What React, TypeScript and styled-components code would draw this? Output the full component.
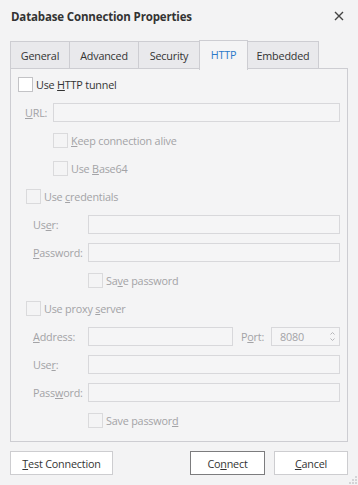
import React from "react";
import styled, { createGlobalStyle } from "styled-components";

const Global = createGlobalStyle`
  html, body { margin: 0; padding: 0; background: #f3f3f4; }
  body { font-family: "Open Sans", "Noto Sans", sans-serif; font-size: 10.8px; letter-spacing: -0.2px; color: #333; }
  * { box-sizing: border-box; }
`;

const Dialog = styled.div`
  width: 358px;
  height: 485px;
  background: #f3f3f4;
  display: flex;
  flex-direction: column;
  position: relative;
`;

const Header = styled.div`
  height: 32px;
  display: flex;
  align-items: center;
  justify-content: space-between;
  padding: 0 12px 0 11px;
`;

const Title = styled.div`
  font-weight: 700;
  font-size: 11.5px;
  letter-spacing: -0.15px;
  color: #333;
`;

const CloseBtn = styled.button`
  width: 14px;
  height: 14px;
  border: 0;
  padding: 0;
  background: transparent;
  display: flex;
  align-items: center;
  justify-content: center;
`;

const Tabs = styled.div`
  display: flex;
  align-items: flex-end;
  margin: 8px 0 0 10px;
  height: 29px;
  position: relative;
  z-index: 1;
`;

const Tab = styled.div<{ $w: number; $active?: boolean }>`
  width: ${(p) => p.$w}px;
  height: ${(p) => (p.$active ? 30 : 28)}px;
  margin-bottom: ${(p) => (p.$active ? -1 : 0)}px;
  margin-left: -1px;
  &:first-child { margin-left: 0; }
  border: 1px solid #cdcdd2;
  border-bottom: ${(p) => (p.$active ? "none" : "1px solid #cdcdd2")};
  background: ${(p) => (p.$active ? "#f4f4f5" : "#e9e9ec")};
  color: ${(p) => (p.$active ? "#2b79c9" : "#333")};
  display: flex;
  align-items: center;
  justify-content: center;
  padding-bottom: ${(p) => (p.$active ? 2 : 0)}px;
  position: relative;
  z-index: ${(p) => (p.$active ? 2 : 1)};
`;

const Panel = styled.div`
  margin: -1px 10px 0 10px;
  height: 374px;
  border: 1px solid #cdcdd2;
  background: #f4f4f5;
  padding: 1px 7px 0 0;
  display: flex;
  flex-direction: column;
`;

const Row = styled.div<{ $indent: number }>`
  height: 28px;
  display: flex;
  align-items: center;
  padding-left: ${(p) => p.$indent}px;
`;

const Box = styled.span<{ $enabled?: boolean }>`
  width: 15px;
  height: 15px;
  flex: none;
  border: 1px solid ${(p) => (p.$enabled ? "#c3c3c6" : "#dadadc")};
  background: ${(p) => (p.$enabled ? "#ffffff" : "#f4f4f5")};
  margin-right: 3px;
`;

const CheckLabel = styled.span<{ $enabled?: boolean }>`
  color: ${(p) => (p.$enabled ? "#333" : "#a3a3a6")};
  white-space: nowrap;
`;

const FieldLabel = styled.span<{ $w: number }>`
  width: ${(p) => p.$w}px;
  flex: none;
  color: #a3a3a6;
  white-space: nowrap;
`;

const Input = styled.div<{ $w?: number }>`
  height: 19px;
  flex: ${(p) => (p.$w ? "none" : "1")};
  width: ${(p) => (p.$w ? `${p.$w}px` : "auto")};
  border: 1px solid #d8d8db;
  background: #f5f5f6;
  display: flex;
  align-items: center;
  justify-content: space-between;
  padding: 0 4px 0 8px;
  color: #a3a3a6;
`;

const PortLabel = styled.span`
  width: 30px;
  margin-left: 8px;
  flex: none;
  color: #a3a3a6;
`;

const Spin = styled.svg`
  flex: none;
`;

const Footer = styled.div`
  display: flex;
  align-items: center;
  padding: 0 10px;
  margin-top: 9px;
  gap: 9px;
`;

const Button = styled.button<{ $w: number; $default?: boolean }>`
  width: ${(p) => p.$w}px;
  height: 24px;
  background: #ffffff;
  border: 1px solid ${(p) => (p.$default ? "#7c7c7e" : "#cdcdd0")};
  font-family: inherit;
  font-size: inherit;
  letter-spacing: inherit;
  color: #333;
  padding: 0;
`;

const Spacer = styled.div`
  flex: 1;
`;

const Grip = styled.svg`
  position: absolute;
  right: 1px;
  bottom: 1px;
`;

export default function App() {
  return (
    <Dialog>
      <Global />
      <Header>
        <Title>Database Connection Properties</Title>
        <CloseBtn aria-label="Close">
          <svg width="10" height="10" viewBox="0 0 10 10">
            <path d="M1 1 L9 9 M9 1 L1 9" stroke="#444" strokeWidth="1.4" />
          </svg>
        </CloseBtn>
      </Header>
      <Tabs>
        <Tab $w={60}>General</Tab>
        <Tab $w={70}>Advanced</Tab>
        <Tab $w={62}>Security</Tab>
        <Tab $w={49} $active>HTTP</Tab>
        <Tab $w={72}>Embedded</Tab>
      </Tabs>
      <Panel>
        <Row $indent={7}>
          <Box $enabled />
          <CheckLabel $enabled>
            Use <u>H</u>TTP tunnel
          </CheckLabel>
        </Row>
        <Row $indent={14}>
          <FieldLabel $w={28}>
            <u>U</u>RL:
          </FieldLabel>
          <Input />
        </Row>
        <Row $indent={42}>
          <Box />
          <CheckLabel>
            <u>K</u>eep connection alive
          </CheckLabel>
        </Row>
        <Row $indent={42}>
          <Box />
          <CheckLabel>
            Use <u>B</u>ase64
          </CheckLabel>
        </Row>
        <Row $indent={15}>
          <Box />
          <CheckLabel>
            Use <u>c</u>redentials
          </CheckLabel>
        </Row>
        <Row $indent={22}>
          <FieldLabel $w={55}>
            Us<u>e</u>r:
          </FieldLabel>
          <Input />
        </Row>
        <Row $indent={22}>
          <FieldLabel $w={55}>
            <u>P</u>assword:
          </FieldLabel>
          <Input />
        </Row>
        <Row $indent={77}>
          <Box />
          <CheckLabel>
            Sa<u>v</u>e password
          </CheckLabel>
        </Row>
        <Row $indent={15}>
          <Box />
          <CheckLabel>
            Use proxy <u>s</u>erver
          </CheckLabel>
        </Row>
        <Row $indent={22}>
          <FieldLabel $w={55}>
            <u>A</u>ddress:
          </FieldLabel>
          <Input $w={145} />
          <PortLabel>
            P<u>o</u>rt:
          </PortLabel>
          <Input>
            8080
            <Spin width="5" height="11" viewBox="0 0 5 11">
              <path d="M0.5 3.5 L2.5 1.5 L4.5 3.5 M0.5 7.5 L2.5 9.5 L4.5 7.5" stroke="#b5b5b8" strokeWidth="1" fill="none" />
            </Spin>
          </Input>
        </Row>
        <Row $indent={22}>
          <FieldLabel $w={55}>
            Use<u>r</u>:
          </FieldLabel>
          <Input />
        </Row>
        <Row $indent={22}>
          <FieldLabel $w={55}>
            Pass<u>w</u>ord:
          </FieldLabel>
          <Input />
        </Row>
        <Row $indent={77}>
          <Box />
          <CheckLabel>
            Save passwor<u>d</u>
          </CheckLabel>
        </Row>
      </Panel>
      <Footer>
        <Button $w={103}>
          <u>T</u>est Connection
        </Button>
        <Spacer />
        <Button $w={75} $default>
          Co<u>n</u>nect
        </Button>
        <Button $w={74}>
          <u>C</u>ancel
        </Button>
      </Footer>
      <Grip width="8" height="8" viewBox="0 0 8 8">
        <rect x="6" y="0" width="2" height="2" fill="#d4d4d6" />
        <rect x="3" y="3" width="2" height="2" fill="#d4d4d6" />
        <rect x="6" y="3" width="2" height="2" fill="#d4d4d6" />
        <rect x="0" y="6" width="2" height="2" fill="#d4d4d6" />
        <rect x="3" y="6" width="2" height="2" fill="#d4d4d6" />
        <rect x="6" y="6" width="2" height="2" fill="#d4d4d6" />
      </Grip>
    </Dialog>
  );
}
